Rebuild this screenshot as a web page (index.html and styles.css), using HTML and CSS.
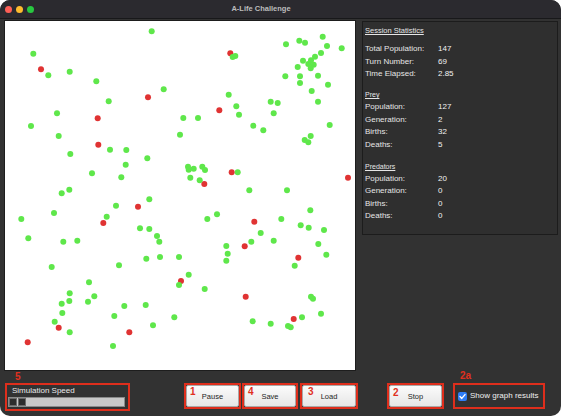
FILE: index.html
```html
<!DOCTYPE html>
<html>
<head>
<meta charset="utf-8">
<title>A-Life Challenge</title>
<link rel="stylesheet" href="styles.css">
</head>
<body>
<div class="window">
  <div class="titlebar">
    <div class="lights">
      <span class="light l-red"></span>
      <span class="light l-yellow"></span>
      <span class="light l-green"></span>
    </div>
    <div class="title">A-Life Challenge</div>
  </div>
  <div class="main">
    <div class="top">
      <div class="canvas">
        <svg class="field" viewBox="5 21 350 349" width="350" height="349">
          <g class="pred">
            <circle cx="41" cy="69.3" r="3"/><circle cx="148" cy="97.3" r="3"/><circle cx="97.7" cy="118.3" r="3"/><circle cx="98.3" cy="144.7" r="3"/><circle cx="230.3" cy="53.3" r="3"/><circle cx="219.3" cy="110.3" r="3"/><circle cx="231.7" cy="172.3" r="3"/><circle cx="204.3" cy="184" r="3"/><circle cx="348" cy="177.7" r="3"/><circle cx="138" cy="206.7" r="3"/><circle cx="103.3" cy="223" r="3"/><circle cx="181" cy="281" r="3"/><circle cx="58.7" cy="327.7" r="3"/><circle cx="129.3" cy="332.3" r="3"/><circle cx="27.7" cy="342.3" r="3"/><circle cx="254.3" cy="221.7" r="3"/><circle cx="244.7" cy="246.3" r="3"/><circle cx="298.3" cy="257.7" r="3"/><circle cx="245.7" cy="296.7" r="3"/><circle cx="293.7" cy="319" r="3"/>
          </g>
          <g class="prey">
            <circle cx="151.7" cy="31.3" r="3"/><circle cx="33.3" cy="53.7" r="3"/><circle cx="48.3" cy="75.3" r="3"/><circle cx="69.7" cy="71.7" r="3"/><circle cx="96.3" cy="81.3" r="3"/><circle cx="163.7" cy="89.3" r="3"/><circle cx="108.7" cy="101.3" r="3"/><circle cx="57" cy="113.3" r="3"/><circle cx="31" cy="126" r="3"/><circle cx="58.7" cy="136" r="3"/><circle cx="180" cy="134.7" r="3"/><circle cx="110" cy="149.7" r="3"/><circle cx="126.3" cy="150" r="3"/><circle cx="70.3" cy="154" r="3"/><circle cx="125.7" cy="164.7" r="3"/><circle cx="147.3" cy="158.3" r="3"/><circle cx="92" cy="173.3" r="3"/><circle cx="121.3" cy="177.3" r="3"/><circle cx="69.3" cy="189.7" r="3"/><circle cx="61.7" cy="193.3" r="3"/><circle cx="149.3" cy="199.3" r="3"/>
            <circle cx="322.7" cy="36.7" r="3"/><circle cx="286" cy="44.3" r="3"/><circle cx="299.3" cy="40.7" r="3"/><circle cx="305" cy="42.7" r="3"/><circle cx="327" cy="46" r="3"/><circle cx="341.7" cy="48.3" r="3"/><circle cx="232.7" cy="57" r="3"/><circle cx="235.3" cy="56" r="3"/><circle cx="321" cy="53" r="3"/><circle cx="315" cy="56.7" r="3"/><circle cx="303" cy="60.7" r="3"/><circle cx="311" cy="60.3" r="3"/><circle cx="308.3" cy="64" r="3"/><circle cx="313.7" cy="64.7" r="3"/><circle cx="310.7" cy="68.3" r="3"/><circle cx="297.7" cy="67" r="3"/><circle cx="285.3" cy="76.3" r="3"/><circle cx="300" cy="76.3" r="3"/><circle cx="318" cy="75.7" r="3"/><circle cx="300" cy="83" r="3"/><circle cx="328" cy="84.7" r="3"/><circle cx="311.7" cy="91" r="3"/><circle cx="228.7" cy="94.7" r="3"/><circle cx="270.7" cy="101.7" r="3"/><circle cx="277.7" cy="103" r="3"/><circle cx="318" cy="101.7" r="3"/><circle cx="236.3" cy="106.3" r="3"/><circle cx="239" cy="114.7" r="3"/><circle cx="273.7" cy="113.3" r="3"/><circle cx="183.3" cy="118" r="3"/><circle cx="198" cy="118" r="3"/><circle cx="253.3" cy="125.7" r="3"/><circle cx="263.3" cy="130.3" r="3"/><circle cx="329.7" cy="125" r="3"/><circle cx="310.7" cy="136" r="3"/><circle cx="304.7" cy="140" r="3"/><circle cx="308.3" cy="142.3" r="3"/><circle cx="188" cy="166.7" r="3"/><circle cx="188.7" cy="169.7" r="3"/><circle cx="193.7" cy="168.7" r="3"/><circle cx="202.3" cy="166.7" r="3"/><circle cx="205" cy="170" r="3"/><circle cx="237.7" cy="172.3" r="3"/><circle cx="190.3" cy="177.7" r="3"/><circle cx="199.7" cy="180.3" r="3"/><circle cx="249.3" cy="190.3" r="3"/><circle cx="287" cy="190.3" r="3"/>
            <circle cx="116" cy="205.7" r="3"/><circle cx="54" cy="213" r="3"/><circle cx="21.3" cy="219" r="3"/><circle cx="106.7" cy="216.7" r="3"/><circle cx="140" cy="228.3" r="3"/><circle cx="149.3" cy="229" r="3"/><circle cx="157" cy="236" r="3"/><circle cx="159.3" cy="241.7" r="3"/><circle cx="28.3" cy="238.3" r="3"/><circle cx="63.3" cy="241.7" r="3"/><circle cx="77.3" cy="240.7" r="3"/><circle cx="146.3" cy="258.7" r="3"/><circle cx="160" cy="257" r="3"/><circle cx="179" cy="257" r="3"/><circle cx="51.7" cy="267" r="3"/><circle cx="119" cy="265.3" r="3"/><circle cx="89" cy="282.3" r="3"/><circle cx="179" cy="285" r="3"/><circle cx="69.7" cy="293.3" r="3"/><circle cx="94.3" cy="296.3" r="3"/><circle cx="61.7" cy="303.7" r="3"/><circle cx="69.3" cy="301" r="3"/><circle cx="88" cy="301.7" r="3"/><circle cx="124.3" cy="306" r="3"/><circle cx="145.7" cy="305" r="3"/><circle cx="62.3" cy="313" r="3"/><circle cx="114.3" cy="316" r="3"/><circle cx="174.3" cy="317.3" r="3"/><circle cx="54.7" cy="321.7" r="3"/><circle cx="153" cy="325.3" r="3"/><circle cx="69.7" cy="332.3" r="3"/><circle cx="113" cy="346" r="3"/>
            <circle cx="207.3" cy="219" r="3"/><circle cx="217" cy="214.3" r="3"/><circle cx="281.3" cy="219" r="3"/><circle cx="310.3" cy="210.3" r="3"/><circle cx="300.7" cy="225.3" r="3"/><circle cx="308.7" cy="227.7" r="3"/><circle cx="324" cy="230" r="3"/><circle cx="260.7" cy="233" r="3"/><circle cx="251.3" cy="241.7" r="3"/><circle cx="273.7" cy="240.7" r="3"/><circle cx="226.3" cy="246" r="3"/><circle cx="318.3" cy="244" r="3"/><circle cx="227.7" cy="253.7" r="3"/><circle cx="226.3" cy="260.7" r="3"/><circle cx="326.3" cy="254.7" r="3"/><circle cx="294.7" cy="265.7" r="3"/><circle cx="188.7" cy="274.7" r="3"/><circle cx="204.7" cy="289" r="3"/><circle cx="311" cy="296.7" r="3"/><circle cx="313" cy="298.7" r="3"/><circle cx="321" cy="313.7" r="3"/><circle cx="302" cy="317.3" r="3"/><circle cx="252.7" cy="321.3" r="3"/><circle cx="270.7" cy="323.7" r="3"/><circle cx="288" cy="326" r="3"/><circle cx="290.7" cy="327.3" r="3"/>
          </g>
        </svg>
      </div>
      <div class="stats">
        <div class="stats-head">Session Statistics</div>
        <div class="rows first">
          <div class="row"><span class="lbl">Total Population:</span><span class="val">147</span></div>
          <div class="row"><span class="lbl">Turn Number:</span><span class="val">69</span></div>
          <div class="row"><span class="lbl">Time Elapsed:</span><span class="val">2.85</span></div>
        </div>
        <div class="sect sect-prey">Prey</div>
        <div class="rows">
          <div class="row"><span class="lbl">Population:</span><span class="val">127</span></div>
          <div class="row"><span class="lbl">Generation:</span><span class="val">2</span></div>
          <div class="row"><span class="lbl">Births:</span><span class="val">32</span></div>
          <div class="row"><span class="lbl">Deaths:</span><span class="val">5</span></div>
        </div>
        <div class="sect sect-pred">Predators</div>
        <div class="rows">
          <div class="row"><span class="lbl">Population:</span><span class="val">20</span></div>
          <div class="row"><span class="lbl">Generation:</span><span class="val">0</span></div>
          <div class="row"><span class="lbl">Births:</span><span class="val">0</span></div>
          <div class="row"><span class="lbl">Deaths:</span><span class="val">0</span></div>
        </div>
      </div>
    </div>
    <div class="controls">
      <div class="abox speed">
        <span class="tag tag-5">5</span>
        <div class="speed-label">Simulation Speed</div>
        <div class="slider"><span class="knob"></span><span class="knob"></span></div>
      </div>
      <div class="abox bx-pause">
        <div class="btn"><span class="num num-1">1</span>Pause</div>
      </div>
      <div class="abox bx-save">
        <div class="btn"><span class="num num-4">4</span>Save</div>
      </div>
      <div class="abox bx-load">
        <div class="btn"><span class="num num-3">3</span>Load</div>
      </div>
      <div class="abox bx-stop">
        <div class="btn"><span class="num num-2">2</span>Stop</div>
      </div>
      <div class="abox bx-graph">
        <span class="tag tag-2a">2a</span>
        <span class="check"><svg viewBox="0 0 9 9" width="9" height="9"><path d="M2 4.6 L3.8 6.4 L7 2.6" class="tick"/></svg></span>
        <span class="graph-label">Show graph results</span>
      </div>
    </div>
  </div>
</div>
</body>
</html>
```

FILE: styles.css
```css
* { box-sizing: border-box; }

body {
  margin: 0;
  background: #ffffff;
  font-family: "Liberation Sans", Arial, sans-serif;
}

.window {
  width: 561px;
  height: 416px;
  background: #323232;
  border-radius: 10px;
  overflow: hidden;
}

.titlebar {
  height: 19px;
  background: #2b2a2f;
  border-bottom: 1px solid #18181a;
  display: flex;
  align-items: center;
}

.lights {
  width: 40px;
  display: flex;
  gap: 4px;
  padding-left: 5px;
}

.light {
  width: 7px;
  height: 7px;
  border-radius: 50%;
}
.l-red { background: #fe5f57; }
.l-yellow { background: #febc2e; }
.l-green { background: #28c840; }

.title {
  flex: 1;
  text-align: center;
  padding-right: 79px;
  color: #bdbdbd;
  font-weight: bold;
  font-size: 7.5px;
  line-height: 10px;
}

.main {
  padding: 1px 0 0 4px;
}

.top {
  display: flex;
  align-items: flex-start;
}

.canvas {
  width: 352px;
  height: 351px;
  border: 1px solid #1d1d1d;
  background: #ffffff;
}

.field { display: block; }
.prey { fill: #5fe74b; }
.pred { fill: #e03333; }

.stats {
  margin-left: 6px;
  margin-top: 1px;
  width: 196px;
  height: 214px;
  border: 1px solid #1c1c1c;
  background: #2f2f2f;
  padding: 4px 0 0 2px;
  color: #e6e6e6;
}

.stats-head {
  font-size: 7.5px;
  line-height: 10px;
  text-decoration: underline;
}

.rows { margin-top: 1px; }
.rows.first { margin-top: 7px; }

.row {
  display: flex;
  font-size: 8px;
  line-height: 12.6px;
}
.rows.first .row { line-height: 12.5px; }

.lbl { width: 73px; }
.val { color: #f2f2f2; }

.sect {
  font-size: 7px;
  line-height: 10px;
  text-decoration: underline;
}
.sect-prey { margin-top: 9.7px; }
.sect-pred { margin-top: 10px; }

.controls {
  display: flex;
  align-items: flex-start;
  padding-top: 12px;
  margin-left: 1px;
}

.abox {
  position: relative;
  border: 2px solid #de2e1c;
  height: 26px;
}

.tag {
  position: absolute;
  color: #e0301e;
  font-weight: bold;
  font-size: 10px;
  line-height: 10px;
}
.tag-5 { left: 8px; top: -13px; }
.tag-2a { left: 5px; top: -14px; }

.speed {
  width: 125px;
  height: 28px;
  padding: 0 0 0 1px;
}

.speed-label {
  color: #e8e8e8;
  font-size: 8px;
  line-height: 12px;
  padding: 0 0 0 4px;
}

.slider {
  width: 117px;
  height: 10px;
  background: #c8c8c8;
  border: 1px solid #8a8a8a;
  display: flex;
  gap: 1px;
  padding: 0 0 0 0;
}

.knob {
  width: 8px;
  height: 8px;
  background: #2d2d2d;
  border: 1px solid #6a6a6a;
}

.bx-pause { margin-left: 54px; width: 57px; }
.bx-save { margin-left: 1px; width: 56px; }
.bx-load { margin-left: 2px; width: 58px; }
.bx-stop { margin-left: 29px; width: 57px; }

.btn {
  position: relative;
  width: 100%;
  height: 100%;
  border: 1px solid #a9a9a9;
  border-radius: 2px;
  background: linear-gradient(#fbfbfb, #e6e6e6);
  color: #1e1e1e;
  font-size: 7.5px;
  display: flex;
  align-items: center;
  justify-content: center;
}

.num {
  position: absolute;
  left: 3px;
  top: 1px;
  color: #e0301e;
  font-weight: bold;
  font-size: 10px;
  line-height: 10px;
}
.num-1 { left: 3px; }
.num-4 { left: 3px; }
.num-3 { left: 5px; }
.num-2 { left: 3px; top: 2px; }

.bx-graph {
  margin-left: 9px;
  width: 92px;
  display: flex;
  align-items: center;
  padding-left: 3px;
}

.check {
  width: 9px;
  height: 9px;
  border-radius: 2px;
  background: #2e7cf6;
  display: block;
}
.check svg { display: block; }
.tick {
  fill: none;
  stroke: #ffffff;
  stroke-width: 1.4;
  stroke-linecap: round;
  stroke-linejoin: round;
}

.graph-label {
  margin-left: 3px;
  color: #f0f0f0;
  font-size: 8px;
  line-height: 10px;
}
```
